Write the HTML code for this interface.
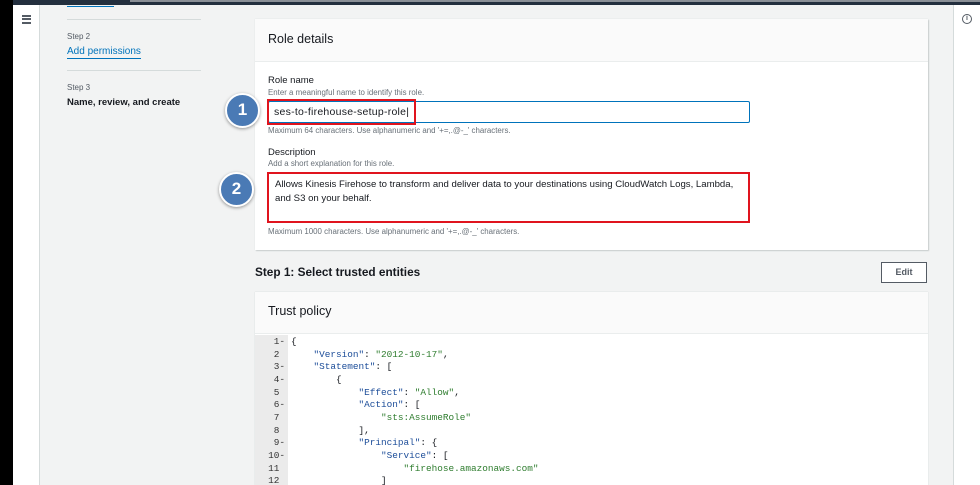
<!DOCTYPE html>
<html><head><style>
*{margin:0;padding:0;box-sizing:border-box}
html,body{width:980px;height:485px;overflow:hidden}
body{background:#f2f3f3;font-family:"Liberation Sans","DejaVu Sans",sans-serif;position:relative;color:#16191f}
.a{position:absolute}
.mono{font-family:"Liberation Mono","DejaVu Sans Mono",monospace;font-size:9.4px;white-space:pre}
.k{color:#1c4d99}.s{color:#2f7d2f}
.h{font-size:7.9px;color:#687078}
</style></head><body>
<div class="a" style="left:0;top:0;width:13px;height:485px;background:#000"></div>
<div class="a" style="left:13px;top:0;width:967px;height:5px;background:#232f3e"></div>
<div class="a" style="left:130px;top:0;width:850px;height:2px;background:#8a8f96"></div>
<div class="a" style="left:13px;top:5px;width:27px;height:480px;background:#fff;border-right:1px solid #d5dbdb"></div>
<div class="a" style="left:22px;top:15px;width:9px;height:2px;background:#545b64"></div>
<div class="a" style="left:22px;top:18px;width:9px;height:2px;background:#545b64"></div>
<div class="a" style="left:22px;top:22px;width:9px;height:2px;background:#545b64"></div>
<div class="a" style="left:953px;top:5px;width:27px;height:480px;background:#fff;border-left:1px solid #d5dbdb"></div>
<div class="a" style="left:962px;top:14px;width:10px;height:10px;border:1.3px solid #545b64;border-radius:50%;font-size:7px;font-weight:bold;text-align:center;line-height:8px;color:#545b64">i</div>

<div class="a" style="left:67px;top:6px;width:47px;height:1px;background:#0073bb"></div>
<div class="a" style="left:67px;top:19px;width:134px;height:1px;background:#d5dbdb"></div>
<div class="a" style="left:67px;top:32px;font-size:8px;color:#545b64">Step 2</div>
<div class="a" style="left:67px;top:46px;font-size:10px;color:#0073bb;border-bottom:1px solid #0073bb;line-height:12px">Add permissions</div>
<div class="a" style="left:67px;top:70px;width:134px;height:1px;background:#d5dbdb"></div>
<div class="a" style="left:67px;top:83px;font-size:8px;color:#545b64">Step 3</div>
<div class="a" style="left:67px;top:97px;font-size:9.5px;font-weight:bold">Name, review, and create</div>

<div class="a" style="left:255px;top:19px;width:673px;height:231px;background:#fff;box-shadow:1px 1px 1px #c8cccc,0 0 1px #d5dbdb"></div>
<div class="a" style="left:255px;top:19px;width:673px;height:43px;background:#fafafa;border-bottom:1px solid #eaeded"></div>
<div class="a" style="left:268px;top:32px;font-size:12.5px">Role details</div>
<div class="a" style="left:268px;top:75px;font-size:9.5px">Role name</div>
<div class="a h" style="left:268px;top:88px">Enter a meaningful name to identify this role.</div>
<div class="a" style="left:268px;top:101px;width:482px;height:22px;border:1px solid #0073bb;border-radius:2px;background:#fff"></div>
<div class="a" style="left:267px;top:99px;width:149px;height:26px;border:2px solid #e0141e"></div>
<div class="a" style="left:274px;top:106px;font-size:10.5px;letter-spacing:.25px">ses-to-firehouse-setup-role|</div>
<div class="a h" style="left:268px;top:126px">Maximum 64 characters. Use alphanumeric and '+=,.@-_' characters.</div>
<div class="a" style="left:268px;top:147px;font-size:9.5px">Description</div>
<div class="a h" style="left:268px;top:159px">Add a short explanation for this role.</div>
<div class="a" style="left:267px;top:172px;width:483px;height:51px;border:2px solid #e0141e;background:#fff"></div>
<div class="a" style="left:275px;top:178px;font-size:9.6px;line-height:13.5px;width:470px">Allows Kinesis Firehose to transform and deliver data to your destinations using CloudWatch Logs, Lambda,<br>and S3 on your behalf.</div>
<div class="a h" style="left:268px;top:227px">Maximum 1000 characters. Use alphanumeric and '+=,.@-_' characters.</div>

<div class="a" style="left:225px;top:93px;width:35px;height:35px;border-radius:50%;background:#4a7ab5;border:2.5px solid #fff;box-shadow:0 1px 3px rgba(0,0,0,.4);color:#fff;font-weight:bold;font-size:17px;text-align:center;line-height:30px">1</div>
<div class="a" style="left:219px;top:172px;width:35px;height:35px;border-radius:50%;background:#4a7ab5;border:2.5px solid #fff;box-shadow:0 1px 3px rgba(0,0,0,.4);color:#fff;font-weight:bold;font-size:17px;text-align:center;line-height:30px">2</div>

<div class="a" style="left:255px;top:265px;font-size:11.8px;font-weight:bold">Step 1: Select trusted entities</div>
<div class="a" style="left:881px;top:262px;width:46px;height:21px;border:1px solid #545b64;background:#fff;font-size:9px;font-weight:bold;color:#545b64;text-align:center;line-height:19px">Edit</div>

<div class="a" style="left:255px;top:292px;width:673px;height:193px;background:#fff;box-shadow:0 0 1px #c8cccc"></div>
<div class="a" style="left:255px;top:292px;width:673px;height:42px;background:#fafafa;border-bottom:1px solid #eaeded"></div>
<div class="a" style="left:268px;top:304px;font-size:12.5px">Trust policy</div>
<div class="a" style="left:255px;top:335px;width:33px;height:150px;background:#ebebeb"></div>
<div class="a mono" style="left:255px;top:336px;width:33px;text-align:right;line-height:12.65px;color:#333;padding-right:3px">1-
2 
3-
4-
5 
6-
7 
8 
9-
10-
11 
12 </div>
<div class="a mono" style="left:291px;top:336px;line-height:12.65px;color:#16191f">{
    <span class="k">"Version"</span>: <span class="s">"2012-10-17"</span>,
    <span class="k">"Statement"</span>: [
        {
            <span class="k">"Effect"</span>: <span class="s">"Allow"</span>,
            <span class="k">"Action"</span>: [
                <span class="s">"sts:AssumeRole"</span>
            ],
            <span class="k">"Principal"</span>: {
                <span class="k">"Service"</span>: [
                    <span class="s">"firehose.amazonaws.com"</span>
                ]</div>
</body></html>
